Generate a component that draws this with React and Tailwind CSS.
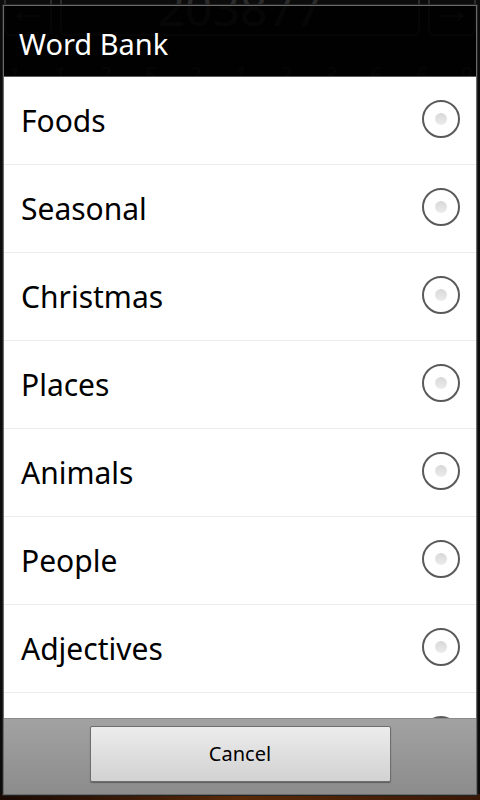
import { useState } from 'react';

const categories = ['Foods', 'Seasonal', 'Christmas', 'Places', 'Animals', 'People', 'Adjectives', 'Verbs', 'Sports'];

function Radio({ checked }) {
  return (
    <span className="flex h-[38px] w-[38px] items-center justify-center rounded-full border-2 border-[#5a5a5a] bg-white">
      <span
        className={`h-[12px] w-[12px] rounded-full ${
          checked ? 'bg-[#33b5e5]' : 'bg-gradient-to-b from-[#d8d8d8] to-[#ececec]'
        }`}
      />
    </span>
  );
}

export default function App() {
  const [selected, setSelected] = useState(null);

  return (
    <div
      className="relative h-[800px] w-[480px] overflow-hidden bg-[#0c0c0c]"
      style={{ fontFamily: '"Noto Sans", "Open Sans", sans-serif' }}
    >
      {/* game screen behind the dialog */}
      <div className="flex h-full flex-col" aria-hidden="true">
        <div className="flex h-[58px] items-start gap-2 px-1">
          <div className="-mt-[20px] flex h-[56px] w-[48px] items-center justify-center rounded-md border-2 border-[#2c2c2c] text-[40px] text-[#2c2c2c]">
            ←
          </div>
          <div className="-mt-[20px] flex h-[56px] flex-1 items-center justify-center rounded-md border-2 border-[#2c2c2c] text-[48px] text-[#2a2a2a]">
            203877
          </div>
          <div className="-mt-[20px] flex h-[56px] w-[48px] items-center justify-center rounded-md border-2 border-[#2c2c2c] text-[40px] text-[#2c2c2c]">
            →
          </div>
        </div>
        <div className="flex justify-between px-2 text-[22px] italic text-[#262626]">
          <span>1</span><span>1</span><span>2</span><span>5</span><span>2</span><span>1</span><span>2</span><span>3</span><span>6</span><span>6</span><span>9</span>
        </div>
        <div className="flex-1" />
        <div className="h-[6px] bg-gradient-to-r from-[#1a0a04] via-[#5a2a08] to-[#3a1806]" />
      </div>

      {/* dialog */}
      <div className="absolute bottom-[5px] left-[3px] right-[3px] top-[5px] flex flex-col border border-[#6a6a6a] shadow-[0_0_0_1px_#222]">
        <div className="flex h-[71px] shrink-0 items-center border-b border-[#5c5c5c] bg-black/85 px-[15px] pt-[6px]">
          <h1 className="text-[29px] text-white">Word Bank</h1>
        </div>

        <ul className="min-h-0 flex-1 overflow-hidden bg-white">
          {categories.map((name) => (
            <li
              key={name}
              onClick={() => setSelected(name)}
              className="flex h-[88px] cursor-pointer items-center justify-between border-b border-[#ececec] pl-[17px] pr-[16px]"
            >
              <span className="text-[30px] text-black">{name}</span>
              <span className="-mt-[3px]">
                <Radio checked={selected === name} />
              </span>
            </li>
          ))}
        </ul>

        <div className="flex h-[76px] shrink-0 items-start justify-center border-t border-[#8a8a8a] bg-gradient-to-b from-[#a2a2a2] to-[#8c8c8c] pt-[7px]">
          <button className="h-[56px] w-[301px] rounded-[2px] border border-[#6e6e6e] bg-gradient-to-b from-[#ececec] to-[#d2d2d2] text-[20px] text-black shadow-[0_1px_1px_rgba(0,0,0,0.35)]">
            Cancel
          </button>
        </div>
      </div>
    </div>
  );
}
